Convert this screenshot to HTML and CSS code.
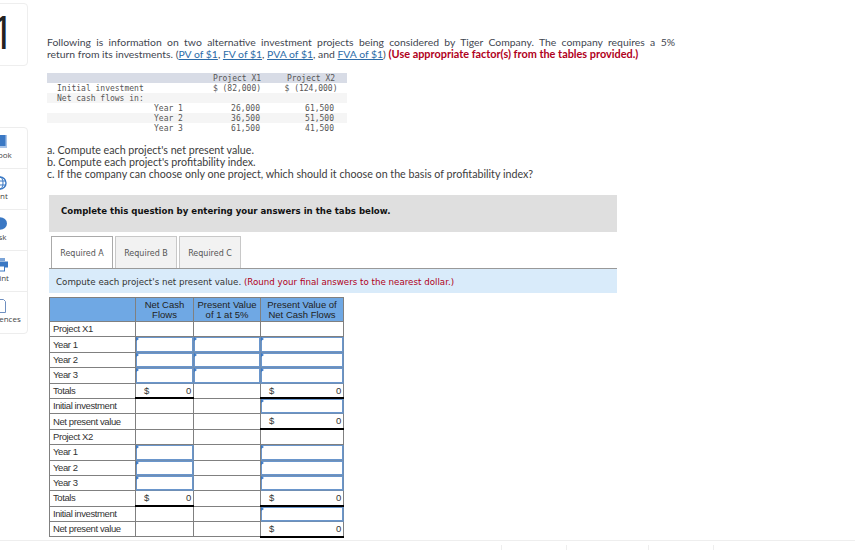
FILE: index.html
```html
<!DOCTYPE html>
<html lang="en">
<head>
<meta charset="utf-8">
<title>Investment projects</title>
<link rel="stylesheet" href="styles.css">
</head>
<body>
<div class="page">
  <aside class="side">
    <div class="qnum">1</div>
    <nav class="tools">
      <div class="tool">
        <svg class="ico" viewBox="0 0 16 14" width="16" height="14"><rect x="1" y="0" width="14" height="13" fill="#a9c4e8"/><rect x="1" y="0" width="12.5" height="11" fill="#3a78c4"/></svg>
        <span>eBook</span>
      </div>
      <div class="tool">
        <svg class="ico" viewBox="0 0 16 14" width="16" height="14"><circle cx="8" cy="7" r="6" fill="#fff" stroke="#3a78c4" stroke-width="1.4"/><ellipse cx="8" cy="7" rx="3" ry="6" fill="none" stroke="#3a78c4"/><path d="M2 5h12M2 9h12" stroke="#3a78c4"/></svg>
        <span>Hint</span>
      </div>
      <div class="tool">
        <svg class="ico" viewBox="0 0 16 14" width="16" height="14"><ellipse cx="8" cy="6.5" rx="7" ry="6.2" fill="#3a78c4"/><path d="M3 10l-1 4 5-2z" fill="#3a78c4"/></svg>
        <span>Ask</span>
      </div>
      <div class="tool">
        <svg class="ico" viewBox="0 0 16 14" width="16" height="14"><rect x="3" y="0" width="10" height="3" fill="#7ba4d8"/><rect x="0" y="3.500" width="16" height="6" fill="#3a78c4"/><rect x="3.500" y="8" width="9" height="5" fill="#fff" stroke="#3a78c4"/></svg>
        <span>Print</span>
      </div>
      <div class="tool">
        <svg class="ico" viewBox="0 0 16 14" width="16" height="14"><path d="M2.500 0.500h9l2 2v11h-11z" fill="#fff" stroke="#6f8fc0"/></svg>
        <span>References</span>
      </div>
    </nav>
  </aside>

  <main class="main">
    <p class="intro"><span class="line1">Following is information on two alternative investment projects being considered by Tiger Company. The company requires a 5%</span> return from its investments. (<a href="#">PV of $1</a>, <a href="#">FV of $1</a>, <a href="#">PVA of $1</a>, and <a href="#">FVA of $1</a>) <b class="red">(Use appropriate factor(s) from the tables provided.)</b></p>

    <table class="data">
      <colgroup><col class="d1"><col class="d2"><col class="d3"><col class="d4"></colgroup>
      <tr class="dh"><td></td><td></td><td class="c">Project X1</td><td class="c2">Project X2</td></tr>
      <tr><td colspan="2" class="lab">Initial investment</td><td class="c">$ (82,000)</td><td class="c2">$ (124,000)</td></tr>
      <tr class="alt"><td colspan="2" class="lab">Net cash flows in:</td><td></td><td></td></tr>
      <tr><td></td><td>Year 1</td><td class="r1">26,000</td><td class="r2">61,500</td></tr>
      <tr class="alt"><td></td><td>Year 2</td><td class="r1">36,500</td><td class="r2">51,500</td></tr>
      <tr><td></td><td>Year 3</td><td class="r1">61,500</td><td class="r2">41,500</td></tr>
    </table>

    <ol class="parts">
      <li>a. Compute each project's net present value.</li>
      <li>b. Compute each project's profitability index.</li>
      <li>c. If the company can choose only one project, which should it choose on the basis of profitability index?</li>
    </ol>

    <div class="banner">Complete this question by entering your answers in the tabs below.</div>

    <div class="tabs">
      <div class="tab on">Required A</div>
      <div class="tab">Required B</div>
      <div class="tab">Required C</div>
    </div>
    <div class="prompt">Compute each project's net present value. <span class="redn">(Round your final answers to the nearest dollar.)</span></div>

    <table class="work">
      <colgroup><col class="w1"><col class="w2"><col class="w3"><col class="w4"></colgroup>
      <tr class="wh"><th></th><th>Net Cash<br>Flows</th><th>Present Value<br>of 1 at 5%</th><th>Present Value of<br>Net Cash Flows</th></tr>
      <tr><td>Project X1</td><td></td><td></td><td></td></tr>
      <tr><td>Year 1</td><td class="in"></td><td class="in"></td><td class="in"></td></tr>
      <tr><td>Year 2</td><td class="in"></td><td class="in"></td><td class="in"></td></tr>
      <tr><td>Year 3</td><td class="in"></td><td class="in"></td><td class="in"></td></tr>
      <tr><td>Totals</td><td class="tot"><span>$</span><span>0</span></td><td></td><td class="tot"><span>$</span><span>0</span></td></tr>
      <tr><td>Initial investment</td><td></td><td></td><td class="in"></td></tr>
      <tr><td>Net present value</td><td></td><td></td><td class="tot"><span>$</span><span>0</span></td></tr>
      <tr><td>Project X2</td><td></td><td></td><td></td></tr>
      <tr><td>Year 1</td><td class="in"></td><td></td><td class="in"></td></tr>
      <tr><td>Year 2</td><td class="in"></td><td></td><td class="in"></td></tr>
      <tr><td>Year 3</td><td class="in"></td><td></td><td class="in"></td></tr>
      <tr><td>Totals</td><td class="tot"><span>$</span><span>0</span></td><td></td><td class="tot"><span>$</span><span>0</span></td></tr>
      <tr><td>Initial investment</td><td></td><td></td><td class="in"></td></tr>
      <tr><td>Net present value</td><td></td><td></td><td class="tot"><span>$</span><span>0</span></td></tr>
    </table>
  </main>
</div>
<footer class="foot">
  <div class="fcell"></div><div class="fcell wide"></div><div class="fcell"></div><div class="fcell"></div>
</footer>
</body>
</html>
```

FILE: styles.css
```css
* { box-sizing: border-box; }
html, body { margin: 0; padding: 0; }
body {
  width: 855px;
  height: 550px;
  overflow: hidden;
  background: #fff;
  font-family: "Lato", "Liberation Sans", sans-serif;
  color: #3c3c3c;
}
.page { display: flex; height: 540px; align-items: flex-start; }

/* left rail, partly cut off by the window edge */
.side { width: 56px; margin-left: -28px; flex: none; padding-top: 3px; }
.qnum {
  height: 63px;
  border: 1px solid #eee;
  border-radius: 4px;
  background: #fff;
  font: 400 45px/1 "Open Sans", sans-serif;
  color: #222;
  text-align: center;
  padding: 5px 0 0 5px;
}
.tools {
  margin-top: 61px;
  border: 1px solid #ededed;
  border-radius: 4px;
}
.tool {
  height: 41px;
  border-bottom: 1px solid #ededed;
  display: flex;
  flex-direction: column;
  align-items: center;
  padding-top: 7px;
  font: 8px/10px "Open Sans", sans-serif;
  color: #444;
}
.tool:last-child { border-bottom: 0; }
.ico { display: block; margin-bottom: 1px; }

.main { width: 600px; margin-left: 19px; flex: none; font-size: 11px; }
.intro {
  width: 628px;
  margin: 36px 0 0;
  font-size: 10.4px;
  line-height: 12px;
  color: #3f4650;
}
.line1 { display: block; text-align: justify; text-align-last: justify; }
.intro a { color: #2c6ba8; text-decoration: underline; }
.red { color: #b00020; font-weight: 700; font-size: 10.9px; }

.data {
  margin-top: 13px;
  width: 300px;
  border-collapse: collapse;
  table-layout: fixed;
  font: 8px/9px "DejaVu Sans Mono", monospace;
  color: #555;
}
.d1 { width: 107px; } .d2 { width: 53px; } .d3 { width: 60px; } .d4 { width: 80px; }
.data tr { height: 10px; }
.data td { padding: 1px 0 0; height: 10px; white-space: pre; }
.dh { background: #d8dce6; }
.alt { background: #f5f5f5; }
.data .lab { padding-left: 10px; }
.c { text-align: center; }
.data .c2 { text-align: center; padding-left: 8px; }
.data .r1 { text-align: right; padding-right: 7px; }
.data .r2 { text-align: right; padding-right: 13px; }

.parts {
  list-style: none;
  margin: 11px 0 0;
  padding: 0;
  width: 620px;
  font-size: 10.7px;
  line-height: 12px;
  color: #3c3c3c;
}

.banner {
  margin: 15px 0 0 2px;
  width: 568px;
  height: 37px;
  background: #dfdfdf;
  padding: 9px 0 0 12px;
  font: 700 8.6px/14px "DejaVu Sans", sans-serif;
  color: #111;
}
.tabs { display: flex; gap: 2px; margin: 4px 0 0 4px; }
.tab {
  width: 62px;
  height: 32px;
  background: #f2f2f2;
  border: 1px solid #c8c8c8;
  border-bottom: 0;
  text-align: center;
  font: 8px/33px "DejaVu Sans", sans-serif;
  color: #555;
}
.tab.on { background: #fff; border: 1px solid #aaa; border-bottom: 0; }
.prompt {
  margin-left: 2px;
  width: 568px;
  height: 25px;
  background: #d9ebfa;
  border-top: 1px solid #999;
  padding-left: 7px;
  font: 8.7px/26px "DejaVu Sans", sans-serif;
  color: #333;
}
.redn { color: #b00020; }

.work {
  margin: 4px 0 0 2px;
  width: 294px;
  border-collapse: collapse;
  table-layout: fixed;
  font: 9.5px/12px "Liberation Sans", sans-serif;
  color: #333;
}
.w1 { width: 86px; } .w2 { width: 58px; } .w3 { width: 67px; } .w4 { width: 83px; }
.work th, .work td { border: 1px solid #808080; padding: 0 0 0 3px; height: 15.4px; letter-spacing: -0.4px; }
.wh th {
  height: 24px;
  background: #6fa8e4;
  font-weight: 400;
  line-height: 10px;
  text-align: center;
  color: #222;
  letter-spacing: 0;
}
.work th { padding: 0; letter-spacing: 0; }
.work .in { position: relative; padding: 0; border-color: #6f8fb5; box-shadow: inset 0 0 0 1px #6a96cc; }
.in::before {
  content: "";
  position: absolute;
  left: 0;
  top: 0;
  border-left: 3px solid #3a78c4;
  border-top: 2px solid transparent;
  border-bottom: 2px solid transparent;
}
.work .tot {
  height: 15.4px;
  padding: 0 2px 0 0;
  border-top: 1px solid #000;
  border-bottom: 2px solid #000;
}
.tot span:first-child { float: left; margin-left: 8px; }
.tot span:last-child { float: right; }

.foot {
  height: 10px;
  border-top: 1px solid #eee;
  display: flex;
  padding: 4px 0 0 501px;
}
.fcell { width: 65px; border-left: 1px solid #eee; }
.fcell.wide { width: 82px; }
```
